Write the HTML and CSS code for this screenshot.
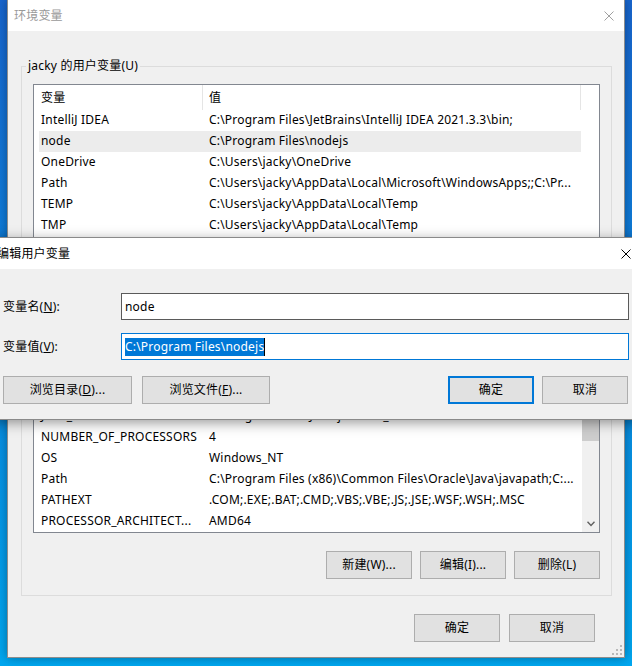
FILE: index.html
```html
<!DOCTYPE html>
<html lang="zh-CN">
<head>
    <meta charset="UTF-8">
    <title>环境变量</title>
    <link rel="stylesheet" href="styles.css">
</head>
<body>
    <div class="window env-window">
        <div class="titlebar">
            <span class="title">环境变量</span>
            <svg class="close" width="10" height="10" viewBox="0 0 10 10"><path d="M0.5 0.5L9.5 9.5M9.5 0.5L0.5 9.5" stroke="#a0a0a0" stroke-width="1"/></svg>
        </div>
        <div class="client">
            <fieldset class="group user-group">
                <legend>jacky 的用户变量(U)</legend>
                <div class="listview user-list">
                    <div class="lv-content">
                        <div class="lv-header">
                            <div class="hcol hname">变量</div>
                            <div class="hcol hvalue">值</div>
                            <div class="hfill"></div>
                        </div>
                        <div class="lv-row"><span class="cname">IntelliJ IDEA</span><span class="cvalue">C:\Program Files\JetBrains\IntelliJ IDEA 2021.3.3\bin;</span></div>
                        <div class="lv-row selected"><span class="cname">node</span><span class="cvalue">C:\Program Files\nodejs</span></div>
                        <div class="lv-row"><span class="cname">OneDrive</span><span class="cvalue">C:\Users\jacky\OneDrive</span></div>
                        <div class="lv-row"><span class="cname">Path</span><span class="cvalue">C:\Users\jacky\AppData\Local\Microsoft\WindowsApps;;C:\Pr...</span></div>
                        <div class="lv-row"><span class="cname">TEMP</span><span class="cvalue">C:\Users\jacky\AppData\Local\Temp</span></div>
                        <div class="lv-row"><span class="cname">TMP</span><span class="cvalue">C:\Users\jacky\AppData\Local\Temp</span></div>
                    </div>
                </div>
                <div class="btn-row">
                    <button class="btn">新建(N)...</button>
                    <button class="btn">编辑(E)...</button>
                    <button class="btn">删除(D)</button>
                </div>
            </fieldset>

            <fieldset class="group sys-group">
                <legend>系统变量(S)</legend>
                <div class="listview sys-list">
                    <div class="lv-content">
                        <div class="lv-header">
                            <div class="hcol hname">变量</div>
                            <div class="hcol hvalue">值</div>
                            <div class="hfill"></div>
                        </div>
                        <div class="lv-row"><span class="cname">ComSpec</span><span class="cvalue">C:\Windows\system32\cmd.exe</span></div>
                        <div class="lv-row"><span class="cname">JAVA_HOME</span><span class="cvalue">C:\Program Files\Java\jdk1.8.0_301</span></div>
                        <div class="lv-row"><span class="cname">NUMBER_OF_PROCESSORS</span><span class="cvalue">4</span></div>
                        <div class="lv-row"><span class="cname">OS</span><span class="cvalue">Windows_NT</span></div>
                        <div class="lv-row"><span class="cname">Path</span><span class="cvalue">C:\Program Files (x86)\Common Files\Oracle\Java\javapath;C:...</span></div>
                        <div class="lv-row"><span class="cname">PATHEXT</span><span class="cvalue">.COM;.EXE;.BAT;.CMD;.VBS;.VBE;.JS;.JSE;.WSF;.WSH;.MSC</span></div>
                        <div class="lv-row"><span class="cname">PROCESSOR_ARCHITECT...</span><span class="cvalue">AMD64</span></div>
                    </div>
                    <div class="scrollbar">
                        <div class="sb-arrow"></div>
                        <div class="sb-thumb"></div>
                        <div class="sb-track"></div>
                        <div class="sb-arrow">
                            <svg width="8" height="6" viewBox="0 0 8 6"><path d="M0.5 0.8L4 4.5L7.5 0.8" fill="none" stroke="#606060" stroke-width="1.4"/></svg>
                        </div>
                    </div>
                </div>
                <div class="btn-row">
                    <button class="btn">新建(W)...</button>
                    <button class="btn">编辑(I)...</button>
                    <button class="btn">删除(L)</button>
                </div>
            </fieldset>

            <div class="btn-row dialog-buttons">
                <button class="btn">确定</button>
                <button class="btn">取消</button>
            </div>
        </div>
        <svg class="grip" width="10" height="10" viewBox="0 0 10 10" fill="#b8b8b8">
            <rect x="8" y="0" width="2" height="2"/>
            <rect x="4" y="4" width="2" height="2"/><rect x="8" y="4" width="2" height="2"/>
            <rect x="0" y="8" width="2" height="2"/><rect x="4" y="8" width="2" height="2"/><rect x="8" y="8" width="2" height="2"/>
        </svg>
    </div>

    <div class="window edit-window">
        <div class="titlebar">
            <span class="title">编辑用户变量</span>
            <svg class="close" width="10" height="10" viewBox="0 0 10 10"><path d="M0.5 0.5L9.5 9.5M9.5 0.5L0.5 9.5" stroke="#000" stroke-width="1"/></svg>
        </div>
        <div class="client">
            <div class="form">
                <label class="field-label">变量名(<u>N</u>):</label>
                <div class="input">node</div>
                <label class="field-label">变量值(<u>V</u>):</label>
                <div class="input focused"><span class="selection">C:\Program Files\nodejs</span><span class="caret"></span></div>
            </div>
            <div class="btn-row edit-buttons">
                <button class="btn browse-dir">浏览目录(<u>D</u>)...</button>
                <button class="btn browse-file">浏览文件(<u>F</u>)...</button>
                <button class="btn default">确定</button>
                <button class="btn">取消</button>
            </div>
        </div>
    </div>
</body>
</html>
```

FILE: styles.css
```css
* {
    margin: 0;
    padding: 0;
    box-sizing: border-box;
}

body {
    width: 632px;
    height: 666px;
    overflow: hidden;
    position: relative;
    font-family: "Noto Sans", "Noto Sans CJK SC", sans-serif;
    font-size: 12px;
    letter-spacing: 0.2px;
    color: #000;
    background: linear-gradient(180deg, #1866cf 0%, #0a86df 50%, #00a7f0 100%);
}

/* windows on the desktop */
.window {
    position: absolute;
    display: flex;
    flex-direction: column;
    background: #f0f0f0;
}

.env-window {
    left: 7px;
    top: -1px;
    width: 618px;
    height: 659px;
    border: 1px solid #8d8d8d;
    box-shadow: 0 0 10px rgba(0, 0, 0, 0.35);
}

.edit-window {
    left: -10px;
    top: 237px;
    width: 660px;
    height: 183px;
    border: 1px solid #8a8a8a;
    box-shadow: 0 3px 12px rgba(0, 0, 0, 0.4);
}

.titlebar {
    height: 31px;
    flex: 0 0 31px;
    background: #fff;
    display: flex;
    align-items: center;
    justify-content: space-between;
    padding-left: 6px;
    line-height: 16px;
}

.env-window .titlebar .title {
    color: #999;
}

.env-window .close {
    margin-right: 10px;
}

.edit-window .close {
    margin-right: 18px;
}

.env-window .client {
    flex: 1;
    padding: 0 12px 0 13px;
}

/* group boxes */
.group {
    border: 1px solid #dcdcdc;
    padding: 0 11px 16px 11px;
    min-width: 0;
}

.group legend {
    padding: 0 2px;
    margin-left: -7px;
    line-height: 16px;
}

.user-group {
    margin-top: 27px;
}

.sys-group {
    margin-top: 10px;
}

/* list views */
.listview {
    margin-top: 10px;
    border: 1px solid #828790;
    background: #fff;
    display: flex;
    overflow: hidden;
}

.user-list {
    height: 176px;
}

.sys-list {
    height: 174px;
}

.lv-content {
    flex: 1;
    min-width: 0;
}

.lv-header {
    display: flex;
    height: 25px;
    line-height: 25px;
}

.hcol {
    border-right: 1px solid #e5e5e5;
    padding-left: 7px;
}

.hname {
    width: 169px;
}

.hvalue {
    width: 378px;
    padding-left: 6px;
}

.hfill {
    flex: 1;
}

.lv-row {
    display: flex;
    width: 542px;
    margin-left: 5px;
    height: 21px;
    line-height: 20px;
    white-space: nowrap;
}

.lv-row.selected {
    background: #ececec;
}

.cname {
    flex: 0 0 164px;
    padding-left: 2px;
    overflow: hidden;
}

.cvalue {
    flex: 1;
    padding-left: 6px;
    overflow: hidden;
}

.scrollbar {
    width: 17px;
    flex: 0 0 17px;
    display: flex;
    flex-direction: column;
    background: #f0f0f0;
}

.sb-arrow {
    height: 17px;
    display: flex;
    align-items: center;
    justify-content: center;
}

.sb-thumb {
    height: 64px;
    background: #cdcdcd;
}

.sb-track {
    flex: 1;
}

/* buttons */
.btn-row {
    display: flex;
    justify-content: flex-end;
    gap: 8px;
    margin-top: 18px;
}

.btn {
    width: 86px;
    height: 28px;
    border: 1px solid #adadad;
    background: #e1e1e1;
    font: inherit;
    letter-spacing: inherit;
    color: #000;
    line-height: 16px;
}

.btn u {
    text-decoration: underline;
}

.dialog-buttons {
    gap: 9px;
    margin-right: 17px;
}

.grip {
    position: absolute;
    right: 2px;
    bottom: 2px;
}

/* edit dialog */
.edit-window .client {
    flex: 1;
    padding: 24px 20px 0 12px;
}

.form {
    display: grid;
    grid-template-columns: 118px 1fr;
    row-gap: 13px;
    align-items: center;
}

.field-label {
    line-height: 16px;
}

.input {
    height: 27px;
    border: 1px solid #5a5a5a;
    background: #fff;
    padding-left: 3px;
    display: flex;
    align-items: center;
    white-space: nowrap;
}

.input.focused {
    border-color: #0078d7;
}

.selection {
    background: #0078d7;
    color: #fff;
    line-height: 18px;
}

.caret {
    width: 1px;
    height: 18px;
    background: #000;
}

.edit-buttons {
    justify-content: flex-start;
    margin-top: 16px;
    margin-right: 1px;
}

.browse-dir {
    width: 129px;
}

.browse-file {
    width: 128px;
    margin-left: 2px;
}

.btn.default {
    margin-left: auto;
    border: 2px solid #0078d7;
}
```
